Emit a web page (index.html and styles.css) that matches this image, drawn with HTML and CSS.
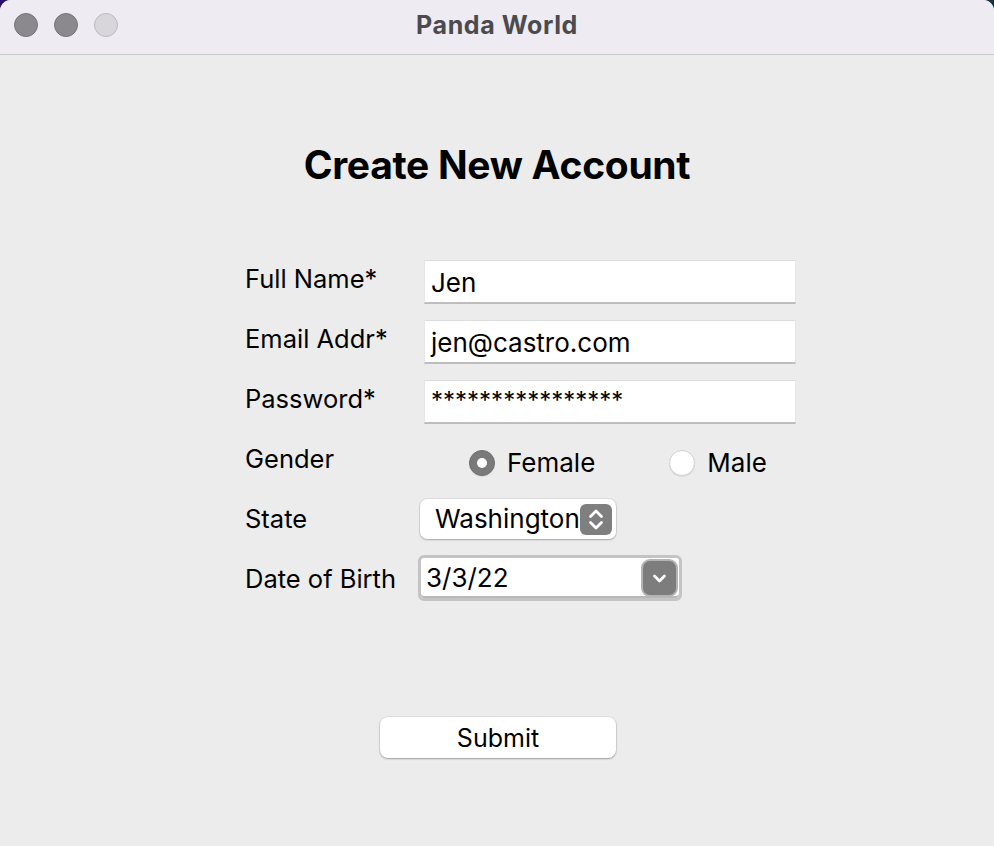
FILE: index.html
```html
<!DOCTYPE html>
<html>
<head>
<meta charset="utf-8">
<link rel="stylesheet" href="styles.css">
</head>
<body>
<div class="window">
  <div class="titlebar">
    <div class="lights">
      <span class="light"></span>
      <span class="light"></span>
      <span class="light off"></span>
    </div>
    <div class="wtitle">Panda World</div>
  </div>
  <div class="content">
    <h1 class="heading">Create New Account</h1>
    <div class="form">
      <div class="label">Full Name*</div>
      <div class="field"><div class="input">Jen</div></div>

      <div class="label">Email Addr*</div>
      <div class="field"><div class="input">jen@castro.com</div></div>

      <div class="label">Password*</div>
      <div class="field"><div class="input pw">****************</div></div>

      <div class="label">Gender</div>
      <div class="field radios">
        <div class="radio-item"><span class="radio on"></span><span class="rtext">Female</span></div>
        <div class="radio-item male"><span class="radio"></span><span class="rtext">Male</span></div>
      </div>

      <div class="label">State</div>
      <div class="field">
        <div class="popup">
          <span class="ptext">Washington</span>
          <span class="stepper">
            <svg width="32" height="31" viewBox="0 0 32 31"><path d="M10.5 12.5 L16 7 L21.5 12.5 M10.5 18.5 L16 24 L21.5 18.5" fill="none" stroke="#fff" stroke-width="2.8" stroke-linecap="round" stroke-linejoin="round"/></svg>
          </span>
        </div>
      </div>

      <div class="label">Date of Birth</div>
      <div class="field">
        <div class="date">
          <span class="dtext">3/3/22</span>
          <span class="dbtn">
            <svg width="33" height="34" viewBox="0 0 33 34"><path d="M11.5 15 L16.5 20 L21.5 15" fill="none" stroke="#fff" stroke-width="2.8" stroke-linecap="round" stroke-linejoin="round"/></svg>
          </span>
        </div>
      </div>
    </div>
    <div class="actions">
      <button class="submit">Submit</button>
    </div>
  </div>
</div>
</body>
</html>
```
FILE: styles.css
```css
html, body {
  margin: 0;
  padding: 0;
}
body {
  width: 994px;
  height: 846px;
  overflow: hidden;
  background: linear-gradient(90deg, #2a0d6e 0%, #1a1840 50%, #17323a 100%);
  font-family: "Inter", "Liberation Sans", sans-serif;
  color: #000;
}
.window {
  width: 994px;
  height: 846px;
  border-radius: 11px 11px 0 0;
  overflow: hidden;
  background: #ececec;
  display: flex;
  flex-direction: column;
}
.titlebar {
  height: 54px;
  flex: none;
  background: #eeebf2;
  border-bottom: 1px solid #c9c7cc;
  display: flex;
  align-items: center;
  position: relative;
}
.lights {
  display: flex;
  gap: 16px;
  padding-left: 14px;
  margin-top: -4px;
}
.light {
  width: 22px;
  height: 22px;
  border-radius: 50%;
  background: #8b898e;
  border: 1px solid #77757a;
}
.light.off {
  background: #d8d6db;
  border-color: #bcbac0;
}
.wtitle {
  position: absolute;
  left: 0;
  right: 0;
  top: 0;
  height: 50px;
  line-height: 50px;
  text-align: center;
  font-weight: 700;
  font-size: 25px;
  color: #4b4a4d;
  letter-spacing: 0.6px;
}
.content {
  flex: 1;
  display: flex;
  flex-direction: column;
}
.heading {
  margin: 87px 0 0 0;
  text-align: center;
  font-size: 39px;
  line-height: 46px;
  font-weight: 700;
  letter-spacing: -0.3px;
}
.form {
  margin: 72px 0 0 245px;
  display: grid;
  grid-template-columns: 175px 380px;
  grid-auto-rows: 44px;
  row-gap: 16px;
  font-size: 26px;
}
.label {
  line-height: 32px;
  margin-top: 3px;
  font-size: 25.5px;
}
.field {
  display: flex;
  align-items: center;
}
.input {
  margin-left: 4px;
  padding-left: 6px;
  box-sizing: border-box;
  width: 372px;
  height: 44px;
  background: #fff;
  border-top: 1px solid #dcdcdc;
  border-left: 1px solid #e6e6e6;
  border-right: 1px solid #e6e6e6;
  border-bottom: 2px solid #bdbdbd;
  line-height: 44px;
}
.input.pw {
  font-size: 24px;
  letter-spacing: 0;
  line-height: 40px;
}
.radios {
  align-items: center;
}
.radio-item {
  display: flex;
  align-items: center;
  margin-left: 49px;
  margin-top: 2px;
}
.radio-item.male {
  margin-left: 74px;
}
.radio {
  width: 26px;
  height: 26px;
  box-sizing: border-box;
  border-radius: 50%;
  background: #fff;
  border: 1px solid #d2d2d2;
  box-shadow: 0 1px 1px rgba(0,0,0,0.08);
  display: flex;
  align-items: center;
  justify-content: center;
}
.radio.on {
  background: #7a7a7a;
  border-color: #6e6e6e;
}
.radio.on::after {
  content: "";
  width: 10px;
  height: 10px;
  border-radius: 50%;
  background: #fff;
}
.rtext {
  margin-left: 12px;
  line-height: 30px;
}
.popup {
  width: 196px;
  height: 40px;
  box-sizing: border-box;
  margin-top: -6px;
  background: #fff;
  border-radius: 7px;
  box-shadow: 0 0 0 1px rgba(0,0,0,0.06), 0 1px 2px rgba(0,0,0,0.25);
  display: flex;
  align-items: center;
  padding-left: 15px;
  padding-right: 4px;
}
.ptext {
  flex: 1;
  line-height: 30px;
  white-space: nowrap;
}
.stepper {
  flex: none;
  width: 32px;
  height: 31px;
  border-radius: 6px;
  background: #7f7f7f;
  display: flex;
}
.date {
  margin-left: -2px;
  margin-top: -8px;
  width: 264px;
  height: 46px;
  box-sizing: border-box;
  border: 3px solid #c4c4c4;
  border-radius: 6px;
  background: #fff;
  box-shadow: inset 0 -2px 0 #b9b9b9;
  display: flex;
  align-items: center;
  padding-left: 5px;
}
.dtext {
  flex: 1;
  line-height: 30px;
}
.dbtn {
  width: 33px;
  height: 34px;
  margin-right: 3px;
  border-radius: 7px;
  background: #7d7d7d;
  box-shadow: 0 0 0 2px #b4b4b4;
  display: flex;
}
.actions {
  display: flex;
  justify-content: center;
  margin-top: 113px;
  padding-left: 2px;
}
.submit {
  width: 236px;
  height: 41px;
  background: #fff;
  border: none;
  border-radius: 8px;
  box-shadow: 0 0 0 1px rgba(0,0,0,0.05), 0 1px 2px rgba(0,0,0,0.3);
  font-family: "Inter", "Liberation Sans", sans-serif;
  font-size: 25px;
  color: #000;
  padding: 0;
}
```
